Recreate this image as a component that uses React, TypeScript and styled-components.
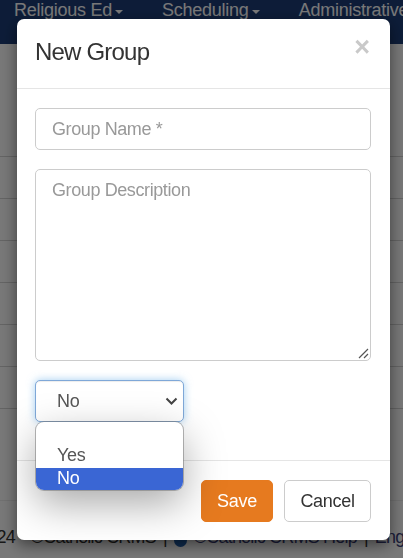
import React from "react";
import styled, { createGlobalStyle } from "styled-components";

const Global = createGlobalStyle`
  html, body { margin: 0; padding: 0; height: 558px; overflow: hidden; background: #fff; }
  * { box-sizing: border-box; }
  body { font-family: "Liberation Sans", Arial, sans-serif; color: #333; }
`;

const Page = styled.div`
  width: 403px;
  height: 558px;
  overflow: hidden;
  display: flex;
  flex-direction: column;
`;

const NavBar = styled.nav`
  height: 44px;
  flex: none;
  background: #1c3d78;
  display: flex;
  gap: 39px;
  padding-left: 14px;
  white-space: nowrap;
  overflow: hidden;
`;

const NavItem = styled.span`
  font-size: 18px;
  letter-spacing: -0.25px;
  line-height: 21px;
  color: #fff;
  display: inline-flex;
  align-items: center;
  height: 21px;
`;

const Caret = styled.i`
  display: inline-block;
  margin-left: 3px;
  margin-top: 3px;
  border-top: 4px solid #fff;
  border-left: 4.5px solid transparent;
  border-right: 4.5px solid transparent;
`;

const Rows = styled.div`
  flex: none;
  padding-top: 71px;
`;

const Row = styled.div`
  height: 42px;
  border-bottom: 1px solid #d4d4d4;
`;

const LastRow = styled.div`
  height: 92px;
  border-bottom: 1px solid #eee;
`;

const Foot = styled.div`
  margin-top: 26px;
  margin-left: -22px;
  font-size: 18px;
  letter-spacing: -0.8px;
  line-height: 21px;
  white-space: nowrap;
  display: flex;
  align-items: center;
  gap: 7px;
  color: #333;
`;

const FootName = styled.span`
  margin-left: 9px;
`;

const FootLink = styled.span`
  color: #3a3f7a;
`;

const Globe = styled.i`
  display: inline-block;
  flex: none;
  width: 13px;
  height: 13px;
  margin-top: 6px;
  border-radius: 50%;
  background: #1f5da8;
`;

const Overlay = styled.div`
  position: fixed;
  inset: 0;
  background: rgba(0, 0, 0, 0.53);
  padding: 19px 13px 18px 17px;
`;

const Modal = styled.div`
  position: relative;
  height: 521px;
  background: #fff;
  border-radius: 7px;
  box-shadow: 0 5px 15px rgba(0, 0, 0, 0.5);
  display: flex;
  flex-direction: column;
  overflow: hidden;
`;

const Header = styled.header`
  height: 70px;
  flex: none;
  border-bottom: 1px solid #e5e5e5;
  padding: 18px 20px 0 18px;
  display: flex;
  justify-content: space-between;
`;

const Title = styled.h4`
  margin: 0;
  font-size: 24px;
  letter-spacing: -0.8px;
  font-weight: 400;
  line-height: 30px;
  color: #333;
`;

const Close = styled.button`
  border: 0;
  padding: 0;
  background: none;
  font-family: inherit;
  font-size: 27px;
  font-weight: 700;
  line-height: 20px;
  height: 20px;
  margin-top: 0;
  color: #c9c9c9;
`;

const Body = styled.div`
  flex: 1;
  padding: 19px 18px 0;
  display: flex;
  flex-direction: column;
  gap: 19px;
  position: relative;
`;

const TextInput = styled.input`
  width: 336px;
  height: 42px;
  border: 1px solid #ccc;
  border-radius: 5px;
  padding: 0 16px;
  font: 18px "Liberation Sans", Arial, sans-serif;
  letter-spacing: -0.4px;
  outline: none;
  &::placeholder { color: #999; opacity: 1; }
`;

const AreaWrap = styled.div`
  position: relative;
  width: 336px;
  height: 192px;
`;

const TextArea = styled.textarea`
  display: block;
  width: 336px;
  height: 192px;
  border: 1px solid #ccc;
  border-radius: 5px;
  padding: 8px 16px;
  font: 18px/24px "Liberation Sans", Arial, sans-serif;
  letter-spacing: -0.4px;
  outline: none;
  resize: none;
  &::placeholder { color: #999; opacity: 1; }
`;

const Grip = styled.svg`
  position: absolute;
  right: 2px;
  bottom: 2px;
`;

const SelectWrap = styled.div`
  position: relative;
  width: 149px;
  height: 42px;
`;

const Select = styled.div`
  width: 149px;
  height: 42px;
  border: 1px solid #7fa8d8;
  border-radius: 5px;
  box-shadow: 0 0 8px rgba(102, 175, 233, 0.6), inset 0 1px 1px rgba(0, 0, 0, 0.075);
  background: #fff;
  padding: 0 5px 0 21px;
  display: flex;
  align-items: center;
  justify-content: space-between;
  font-size: 18px;
  letter-spacing: -0.3px;
  color: #555;
`;

const Menu = styled.ul`
  position: absolute;
  z-index: 3;
  top: 42px;
  left: 1px;
  width: 147px;
  height: 68px;
  margin: 0;
  padding: 0;
  list-style: none;
  background: #fff;
  border-radius: 8px;
  overflow: hidden;
  box-shadow: 0 0 0 1px rgba(120, 120, 120, 0.55), 0 14px 40px rgba(0, 0, 0, 0.34);
`;

const Option = styled.li<{ $active?: boolean }>`
  height: ${(p) => (p.$active ? 22 : 23)}px;
  line-height: 21px;
  padding-left: 21px;
  font-size: 18px;
  letter-spacing: -0.3px;
  color: ${(p) => (p.$active ? "#fff" : "#555")};
  background: ${(p) => (p.$active ? "#3a66d4" : "transparent")};
`;

const Footer = styled.footer`
  height: 80px;
  flex: none;
  border-top: 1px solid #e5e5e5;
  padding: 19px 19px 0 0;
  display: flex;
  justify-content: flex-end;
  gap: 11px;
`;

const Btn = styled.button<{ $primary?: boolean }>`
  height: 42px;
  width: ${(p) => (p.$primary ? 72 : 87)}px;
  border-radius: 5px;
  font: 18px "Liberation Sans", Arial, sans-serif;
  letter-spacing: -0.3px;
  padding: 0;
  border: 1px solid ${(p) => (p.$primary ? "#e67a1f" : "#ccc")};
  background: ${(p) => (p.$primary ? "#e67a1f" : "#fff")};
  color: ${(p) => (p.$primary ? "#fff" : "#333")};
`;

export default function App() {
  return (
    <>
      <Global />
      <Page>
        <NavBar>
          <NavItem>Religious Ed<Caret /></NavItem>
          <NavItem>Scheduling<Caret /></NavItem>
          <NavItem>Administrative</NavItem>
        </NavBar>
        <Rows>
          {Array.from({ length: 7 }, (_, i) => (
            <Row key={i} />
          ))}
          <LastRow />
        </Rows>
        <Foot>
          <span>2024</span>
          <FootName>©Catholic CRMS</FootName>
          <span>|</span>
          <Globe />
          <FootLink>©Catholic CRMS Help</FootLink>
          <span>|</span>
          <FootLink>English</FootLink>
        </Foot>
      </Page>
      <Overlay>
        <Modal>
          <Header>
            <Title>New Group</Title>
            <Close>×</Close>
          </Header>
          <Body>
            <TextInput placeholder="Group Name *" readOnly />
            <AreaWrap>
              <TextArea placeholder="Group Description" readOnly />
              <Grip width="11" height="11" viewBox="0 0 11 11" fill="none">
                <path d="M1 10 L10 1 M6 10 L10 6" stroke="#555" strokeWidth="1.2" />
              </Grip>
            </AreaWrap>
            <SelectWrap>
              <Select>
                No
                <svg width="13" height="8" viewBox="0 0 13 8" fill="none">
                  <path d="M1.5 1.5 L6.5 6.5 L11.5 1.5" stroke="#444" strokeWidth="2" />
                </svg>
              </Select>
              <Menu>
                <Option>&nbsp;</Option>
                <Option>Yes</Option>
                <Option $active>No</Option>
              </Menu>
            </SelectWrap>
          </Body>
          <Footer>
            <Btn $primary>Save</Btn>
            <Btn>Cancel</Btn>
          </Footer>
        </Modal>
      </Overlay>
    </>
  );
}
